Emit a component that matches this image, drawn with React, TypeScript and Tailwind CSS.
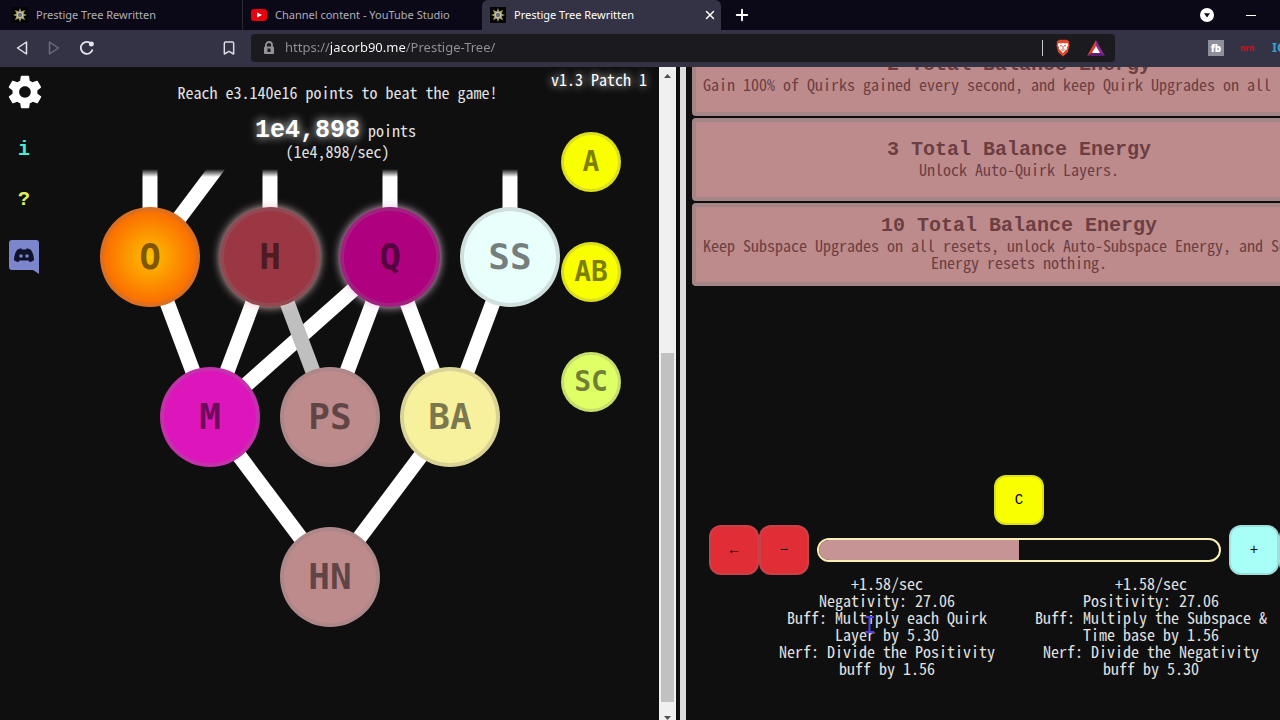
import React from 'react';
import clsx from 'clsx';
import { Bookmark, Plus, X } from 'lucide-react';
import { IoMdSettings } from 'react-icons/io';

const mono = "font-['Noto_Sans_Mono_CJK_JP','Liberation_Mono',monospace]";
const wideMono = "font-['Liberation_Mono',monospace]";
const nodeFont = "font-['DejaVu_Sans_Mono',monospace]";
const uiFont = "font-['Noto_Sans','Open_Sans',sans-serif]";

interface TreeNode {
  id: string;
  className: string;
}

const rows: TreeNode[][] = [
  [
    { id: 'O', className: 'bg-[radial-gradient(circle,#ffbf00,#fa6600_72%)]' },
    { id: 'H', className: 'bg-[#9b3643] shadow-[0_0_10px_#e8c8c8]' },
    { id: 'Q', className: 'bg-[#ae007f] shadow-[0_0_10px_#e8c8e0]' },
    { id: 'SS', className: 'bg-[#e8fffb]' },
  ],
  [
    { id: 'M', className: 'bg-[#dc16bb]' },
    { id: 'PS', className: 'bg-[#be8b8d]' },
    { id: 'BA', className: 'bg-[#f7f09d]' },
  ],
  [{ id: 'HN', className: 'bg-[#be8b8d]' }],
];

const sideNodes: TreeNode[] = [
  { id: 'A', className: 'bg-[#faff00]' },
  { id: 'AB', className: 'bg-[#faff00]' },
  { id: 'SC', className: 'bg-[#dfff66]' },
];

// x1, y1, x2, y2 between node centres
const branches = [
  [150, 88, 150, -72],
  [150, 88, 270, -72],
  [270, 88, 270, -72],
  [390, 88, 390, -72],
  [510, 88, 510, -72],
  [150, 88, 210, 248],
  [270, 88, 210, 248],
  [390, 88, 210, 248],
  [390, 88, 330, 248],
  [390, 88, 450, 248],
  [510, 88, 450, 248],
  [210, 248, 330, 408],
  [450, 248, 330, 408],
];

const milestones = [
  {
    title: '2 Total Balance Energy',
    text: 'Gain 100% of Quirks gained every second, and keep Quirk Upgrades on all resets.',
  },
  { title: '3 Total Balance Energy', text: 'Unlock Auto-Quirk Layers.' },
  {
    title: '10 Total Balance Energy',
    text: 'Keep Subspace Upgrades on all resets, unlock Auto-Subspace Energy, and Subspace Energy resets nothing.',
  },
];

const effects = [
  {
    name: 'Negativity',
    buff: 'Multiply each Quirk Layer by 5.30',
    nerf: 'Divide the Positivity buff by 1.56',
  },
  {
    name: 'Positivity',
    buff: 'Multiply the Subspace & Time base by 1.56',
    nerf: 'Divide the Negativity buff by 5.30',
  },
];

const StarIcon = () => (
  <svg viewBox="0 0 16 16" className="size-4 shrink-0">
    <rect width="16" height="16" fill="#050505" />
    <path
      d="M8 1l1.2 3.4L13 3l-1.4 3.8L15 8l-3.4 1.2L13 13l-3.8-1.4L8 15l-1.2-3.4L3 13l1.4-3.8L1 8l3.4-1.2L3 3l3.8 1.4z"
      fill="#a9a46c"
    />
    <circle cx="8" cy="8" r="3" fill="#d8d3a0" />
    <circle cx="8" cy="8" r="2.2" fill="#6c6a8c" />
  </svg>
);

const YouTubeIcon = () => (
  <svg viewBox="0 0 16 16" className="size-4 shrink-0">
    <rect y="2" width="16" height="12" rx="3" fill="#e8000c" />
    <path d="M6.2 5.4v5.2L11 8z" fill="#fff" />
  </svg>
);

interface TabProps {
  icon: React.ReactNode;
  title: string;
  active?: boolean;
}

const Tab = ({ icon, title, active }: TabProps) => (
  <div
    className={clsx(
      'flex w-[239px] items-center gap-2 px-2',
      active ? 'rounded-t-md bg-[#333345] text-white' : 'text-[#b0afb8]'
    )}
  >
    {icon}
    <span className="flex-1 truncate">{title}</span>
    {active && (
      <button aria-label="Close tab" className="-mr-1">
        <X size={14} strokeWidth={2.5} />
      </button>
    )}
  </div>
);

const BrowserChrome = () => (
  <header className={clsx('shrink-0 bg-[#333345] text-[#dcdce4]', uiFont)}>
    <div className="flex h-[30px] bg-[#0b0917] pl-1 text-[11px]">
      <Tab icon={<StarIcon />} title="Prestige Tree Rewritten" />
      <div className="-ml-px flex border-l border-[#2c2a30]">
        <Tab icon={<YouTubeIcon />} title="Channel content - YouTube Studio" />
      </div>
      <Tab icon={<StarIcon />} title="Prestige Tree Rewritten" active />
      <button aria-label="New tab" className="px-3 text-white">
        <Plus size={18} strokeWidth={2.5} />
      </button>
      <div className="flex flex-1 items-center justify-end gap-8 pr-6">
        <button aria-label="Search tabs">
          <svg viewBox="0 0 14 14" className="size-[14px]">
            <circle cx="7" cy="7" r="7" fill="#fff" />
            <path d="M4 5.2h6L7 9.6z" fill="#0b0917" />
          </svg>
        </button>
        <button aria-label="Minimize" className="h-px w-[10px] bg-white" />
      </div>
    </div>

    <div className="flex h-[37px] items-center pb-px">
      <div className="flex w-[251px] items-center gap-4 pl-4">
        <button aria-label="Back">
          <svg
            viewBox="0 0 16 16"
            className="size-4"
            fill="none"
            stroke="#e4e4ec"
            strokeWidth="1.5"
            strokeLinejoin="round"
          >
            <path d="M10.5 2v12L1.5 8z" />
          </svg>
        </button>
        <button aria-label="Forward">
          <svg
            viewBox="0 0 16 16"
            className="size-4"
            fill="none"
            stroke="#6c6b7c"
            strokeWidth="1.5"
            strokeLinejoin="round"
          >
            <path d="M1.5 2v12l9-6z" />
          </svg>
        </button>
        <button aria-label="Reload">
          <svg viewBox="0 0 16 16" className="size-4" fill="none" stroke="#e4e4ec" strokeWidth="1.8">
            <path d="M10 2.7A6 6 0 1 0 12.6 9.5" />
            <circle cx="11.4" cy="4" r="1.6" fill="#e4e4ec" />
          </svg>
        </button>
        <button aria-label="Bookmark this tab" className="mr-[14px] ml-auto">
          <Bookmark size={16} strokeWidth={2.2} />
        </button>
      </div>
      <div className="flex h-7 w-[864px] items-center rounded bg-[#1a1a1f] pr-[10px] pl-3">
        <svg viewBox="0 0 12 14" className="mr-[10px] h-[14px] w-3 shrink-0">
          <path d="M3 6V4a3 3 0 0 1 6 0v2" fill="none" stroke="#92929a" strokeWidth="1.8" />
          <rect x="1" y="5.5" width="10" height="7.5" rx="1" fill="#92929a" />
          <rect x="4.5" y="7.5" width="3" height="3.5" fill="#1a1a1f" />
        </svg>
        {/* host part is lit up by the gradient */}
        <input
          aria-label="Address"
          defaultValue="https://jacorb90.me/Prestige-Tree/"
          className="min-w-0 flex-1 bg-[linear-gradient(90deg,#92929a_45px,#fff_45px,#fff_121px,#92929a_121px)] bg-clip-text text-[13px] text-transparent outline-none"
        />
        <span className="mr-3 ml-px h-4 w-px bg-[#c8c8d0]" />
        <svg viewBox="0 0 16 18" className="mr-4 h-[18px] w-4">
          <path d="M4 .8h8l2.4 2-.4 1.4.6 2-1.8 7L8 17.4 3.2 13.2l-1.8-7 .6-2-.4-1.4z" fill="#e0482c" />
          <path
            d="M3.6 4l2.7.4L8 3.9l1.7.5L12.4 4l.8 2-1.3 2.4.3 1.5-2.3 1.9L8 14.2l-1.9-2.4-2.3-1.9.3-1.5L2.8 6z"
            fill="#fff"
          />
          <path
            d="M5 6.5l2 .5M11 6.5l-2 .5M8 7v3M6.5 10.5l1.500.8 1.500-.8"
            stroke="#d84c30"
            fill="none"
          />
        </svg>
        <svg viewBox="0 0 18 16" className="h-4 w-[18px]">
          <path d="M9 0L0 16l9-5.5z" fill="#d8402e" />
          <path d="M9 0l9 16-9-5.5z" fill="#8a2b8c" />
          <path d="M0 16h18l-9-5.5z" fill="#5c1f78" />
          <path d="M9 6l-4 7h8z" fill="#fff" />
        </svg>
      </div>
      <div className="flex flex-1 items-center justify-end overflow-hidden">
        <span className="mr-4 flex size-4 items-center justify-center bg-[#8d909c] text-[10px] font-black text-white">
          fb
        </span>
        <span className="mr-4 w-4 text-[8px] font-black text-[#b01c24]">nrn</span>
        <span className="w-2 text-[13px] font-bold text-[#38a0cc]">IC</span>
      </div>
    </div>
  </header>
);

const TreePanel = () => (
  <section className="relative flex overflow-hidden">
    <div className="relative min-w-0 flex-1">
      <div
        className={clsx(
          'h-[102px] pt-[17px] pl-4 text-center text-base leading-[17px] text-[#e2e2e2]',
          mono
        )}
      >
        <p>Reach e3.140e16 points to beat the game!</p>
        <p className="mt-[17px] pr-1 leading-[24px]">
          <span className={clsx('text-[25px] font-bold text-white [text-shadow:0_0_10px_#fff]', wideMono)}>
            1e4,898
          </span>{' '}
          points
        </p>
        <p>(1e4,898/sec)</p>
      </div>

      <div className="relative mx-auto w-[660px] overflow-hidden pt-[38px]">
        <svg className="absolute inset-0 h-full w-full" stroke="#fff" strokeWidth="15">
          {branches.map(([x1, y1, x2, y2]) => (
            <line key={`${x1}-${x2}-${y2}`} x1={x1} y1={y1} x2={x2} y2={y2} />
          ))}
          <line x1="270" y1="88" x2="330" y2="248" stroke="#bfbfbf" />
        </svg>
        <div className="absolute inset-x-10 top-0 h-2 bg-linear-to-b from-[#0f0f0f] to-transparent" />
        <div className="relative flex flex-col gap-[60px]">
          {rows.map((row) => (
            <div key={row[0].id} className="flex justify-center gap-5">
              {row.map((node) => (
                <button
                  key={node.id}
                  className={clsx(
                    'size-[100px] rounded-full border-4 border-[#7f7f7f]/25 bg-origin-border text-[36px] leading-none font-bold text-black/50',
                    nodeFont,
                    node.className
                  )}
                >
                  {node.id}
                </button>
              ))}
            </div>
          ))}
        </div>
      </div>

      <div className="absolute top-[65px] right-[38px] flex flex-col gap-[50px]">
        {sideNodes.map((node) => (
          <button
            key={node.id}
            className={clsx(
              'size-[60px] rounded-full border-3 border-[#7f7f7f]/25 text-[28px] leading-none font-bold text-black/50',
              nodeFont,
              node.className
            )}
          >
            {node.id}
          </button>
        ))}
      </div>

      <nav
        className={clsx(
          'absolute top-[5px] left-[6px] flex w-9 flex-col items-center text-xl font-bold',
          wideMono
        )}
      >
        <button aria-label="Settings" className="pl-[2px] text-white">
          <IoMdSettings size={40} />
        </button>
        <button className="mt-[26px] leading-6 text-[#40f0d0]">i</button>
        <button className="mt-[26px] leading-6 text-[#dff060]">?</button>
        <a href="#discord" aria-label="Discord" className="mt-7">
          <svg viewBox="0 0 30 34" className="h-[34px] w-[30px]">
            <path d="M3 0h24a3 3 0 0 1 3 3v31l-6-4H3a3 3 0 0 1-3-3V3a3 3 0 0 1 3-3z" fill="#7b86cc" />
            <path
              d="M5 20c0-4 1.500-8 3-10 2-1.300 3.500-1.500 4.500-1.400l.4.900h4.200l.4-.9c1-.1 2.500.1 4.500 1.400 1.500 2 3 6 3 10-1.500 1.600-3.500 2-4.500 2l-1-1.500h-9l-1 1.500c-1 0-3-.4-4.500-2z"
              fill="#10122a"
            />
            <circle cx="12" cy="16" r="1.8" fill="#7b86cc" />
            <circle cx="18" cy="16" r="1.8" fill="#7b86cc" />
          </svg>
        </a>
      </nav>

      <button
        className={clsx(
          'absolute top-1 right-3 text-base leading-4 text-white [text-shadow:0_0_8px_#fff]',
          mono
        )}
      >
        v1.3 Patch 1
      </button>
    </div>

    <div className="flex w-[17px] flex-col bg-[#f0f0f0] px-[2px]">
      <div className="flex h-[17px] items-center justify-center">
        <svg viewBox="0 0 7 4" className="h-1 w-[7px]">
          <path d="M0 4l3.500-4L7 4z" fill="#505050" />
        </svg>
      </div>
      <div className="grow-269" />
      <div className="grow-349 bg-[#c1c1c1]" />
      <div className="flex h-[18px] items-end justify-center">
        <svg viewBox="0 0 7 4" className="h-1 w-[7px]">
          <path d="M0 0l3.500 4L7 0z" fill="#505050" />
        </svg>
      </div>
    </div>
  </section>
);

const squareButton = clsx('size-[50px] rounded-xl border-2 border-[#7f7f7f]/25 text-sm text-black', wideMono);

const BalancePanel = () => (
  <section className={clsx('relative overflow-hidden pl-[6px] text-base leading-[17px]', mono)}>
    <div className="-mt-[34px] flex w-[654px] flex-col items-center">
      <ul className="flex w-full flex-col gap-[2px]">
        {milestones.map((m) => (
          <li
            key={m.title}
            className="flex h-[83px] flex-col items-center justify-center rounded border-4 border-[#7f7f7f]/40 bg-[#be8b8d] px-[6px] pb-1 text-center text-[#6b3f42]"
          >
            <h3 className={clsx('pt-px text-xl leading-[22px] font-bold', wideMono)}>{m.title}</h3>
            <p>{m.text}</p>
          </li>
        ))}
      </ul>

      <button className={clsx('mt-[189px] bg-[#faff00]', squareButton)}>C</button>
      <div className="flex items-center">
        <button className={clsx('bg-[#e02d36]', squareButton)}>←</button>
        <button className={clsx('mr-2 bg-[#e02d36]', squareButton)}>−</button>
        <div className="h-6 w-[404px] overflow-hidden rounded-xl border-2 border-[#f8efb5]">
          <div className="h-full w-1/2 bg-[#c69494]" />
        </div>
        <button className={clsx('ml-2 bg-[#a8fff8]', squareButton)}>+</button>
        <button className={clsx('bg-[#a8fff8]', squareButton)}>→</button>
      </div>

      <div className="flex gap-6 text-center text-[#e2e2e2]">
        {effects.map((e) => (
          <div key={e.name} className="w-[240px]">
            <p>+1.58/sec</p>
            <p>{e.name}: 27.06</p>
            <p>Buff: {e.buff}</p>
            <p>Nerf: {e.nerf}</p>
          </div>
        ))}
      </div>
    </div>

    <svg
      viewBox="0 0 9 17"
      className="absolute top-[549px] left-[179px] h-[17px] w-[9px]"
      fill="none"
      stroke="#4a40e0"
      strokeWidth="2"
    >
      <path d="M0 1h3.500l1 1 1-1H9M4.500 2v13M0 16h3.500l1-1 1 1H9" />
    </svg>
  </section>
);

const App = () => (
  <div className="flex h-screen flex-col overflow-hidden bg-[#0f0f0f]">
    <BrowserChrome />
    <main className="grid min-h-0 flex-1 grid-cols-[338fr_5fr_297fr] grid-rows-1">
      <TreePanel />
      <div className="ml-1 bg-[#dcdcdc]" />
      <BalancePanel />
    </main>
  </div>
);

export default App;
